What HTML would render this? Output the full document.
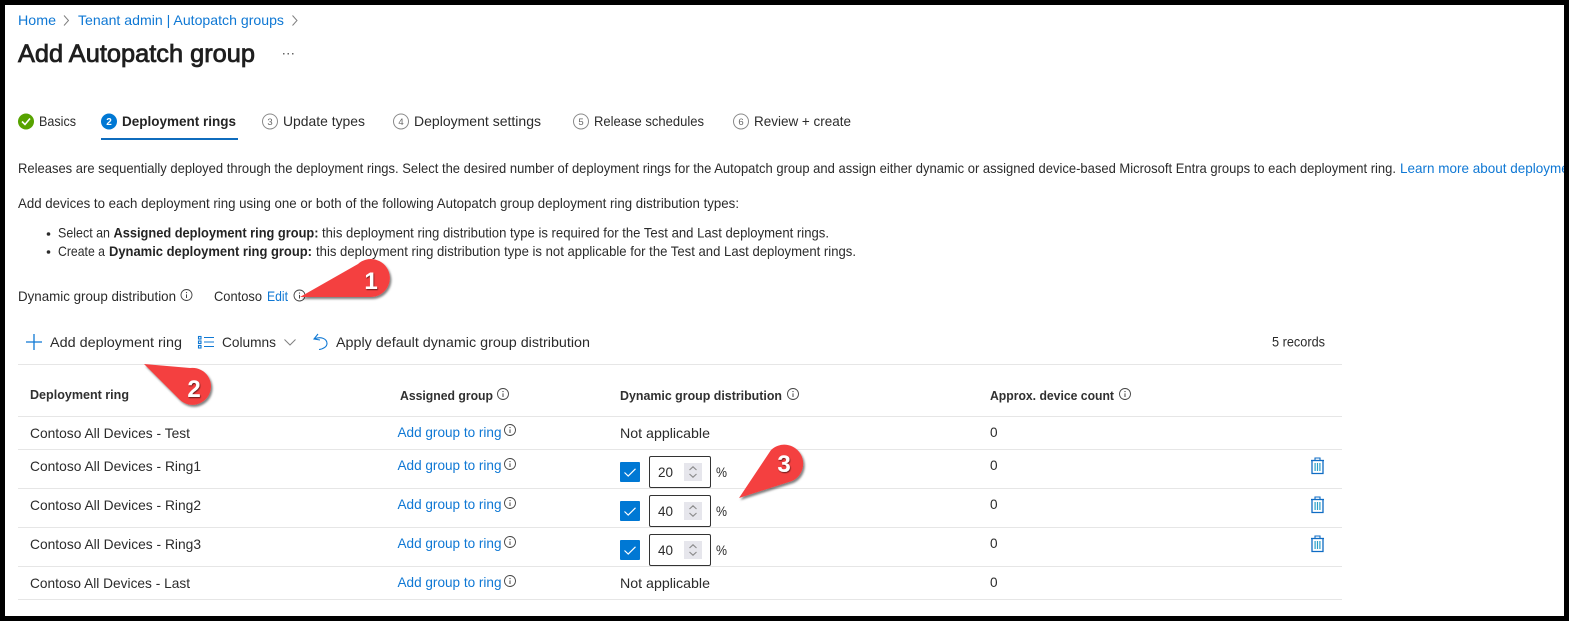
<!DOCTYPE html>
<html lang="en"><head><meta charset="utf-8"><title>Add Autopatch group</title>
<style>
html,body{margin:0;padding:0;background:#fff;width:1569px;height:621px;overflow:hidden}
svg{display:block}
text{font-family:"Liberation Sans",sans-serif;font-size:13.6px;fill:#2b2b2b;white-space:pre}
.l{fill:#0f78d4}
.b{font-weight:700;fill:#242424;font-size:13.4px}
.h{font-weight:700;font-size:12.5px;fill:#303030}
.n{fill:#fff;font-weight:700;font-size:24px;text-anchor:middle}
.m{font-size:14px}
.ic{fill:none;stroke:#808080;stroke-width:1}
</style></head><body>
<svg width="1569" height="621" viewBox="0 0 1569 621" xmlns="http://www.w3.org/2000/svg">
<defs>
<clipPath id="c"><rect x="0" y="0" width="1564" height="616"/></clipPath>
<filter id="s" x="-20%" y="-20%" width="150%" height="150%"><feDropShadow dx="1.5" dy="2" stdDeviation="1" flood-color="#000" flood-opacity=".5"/></filter>
<filter id="t" x="-30%" y="-30%" width="160%" height="160%"><feDropShadow dx="0.7" dy="1" stdDeviation=".6" flood-color="#000" flood-opacity=".6"/></filter>
<g id="i"><circle cx="0" cy="0" r="5.500" fill="none" stroke="#444" stroke-width=".9"/><path d="M0-.6V3" stroke="#444" stroke-width="1"/><rect x="-.55" y="-3" width="1.100" height="1.100" fill="#444"/></g>
<g id="tr"><path d="M-6.500-5.500H6.500" stroke="#0f6cc4" stroke-width="1.300"/><path d="M-2.500-5.500V-8H2.500V-5.500" fill="none" stroke="#0f6cc4" stroke-width="1.100"/><path d="M-5.500-5.500V7.500H5.500V-5.500" fill="none" stroke="#0f6cc4" stroke-width="1.300"/><path d="M-2.400-3V5M0-3V5M2.400-3V5" stroke="#2a9fc8" stroke-width="1.200"/></g>
<g id="sp"><rect x="0" y="0" width="18" height="18" fill="#e6e6ec"/><path d="M5.500 7L9 3.800L12.500 7M5.500 11L9 14.200L12.500 11" fill="none" stroke="#8a8a8a" stroke-width="1.100"/></g>
<g id="ck"><rect x="0" y="0" width="20" height="20" rx="1" fill="#0078d4"/><path d="M4.500 10.500L8.200 14L15.500 6.800" fill="none" stroke="#fff" stroke-width="1.200"/></g>
</defs>
<rect width="1569" height="621" fill="#000"/>
<rect x="5" y="5" width="1559" height="611" fill="#fff"/>
<g clip-path="url(#c)">
<text x="18" y="25" class="l m" textLength="38" lengthAdjust="spacingAndGlyphs">Home</text>
<path d="M64 15.500L68.500 20.500L64 25.500" class="ic"/>
<text x="78" y="25" class="l m" textLength="206" lengthAdjust="spacingAndGlyphs">Tenant admin | Autopatch groups</text>
<path d="M292.500 15.500L297 20.500L292.500 25.500" class="ic"/>
<text x="18" y="62" style="font-size:25px;fill:#1f1f1f;stroke:#1f1f1f;stroke-width:.8px" textLength="237" lengthAdjust="spacingAndGlyphs">Add Autopatch group</text>
<g fill="#666"><rect x="283" y="53" width="1.500" height="1.500"/><rect x="287.500" y="53" width="1.500" height="1.500"/><rect x="292" y="53" width="1.500" height="1.500"/></g>

<circle cx="26" cy="121.500" r="8" fill="#57a300"/><path d="M22 121.500L25 124.500L30 118.500" fill="none" stroke="#fff" stroke-width="1.600"/>
<text x="39" y="126" class="m" textLength="37" lengthAdjust="spacingAndGlyphs">Basics</text>
<circle cx="109" cy="121.500" r="8" fill="#0078d4"/><text x="109" y="125" text-anchor="middle" style="font-size:10px;fill:#fff;font-weight:700">2</text>
<text x="122" y="126" class="b" textLength="114" lengthAdjust="spacingAndGlyphs">Deployment rings</text>
<rect x="101" y="138" width="137" height="2" fill="#0f6cbd"/>
<circle cx="270" cy="121.500" r="7.500" fill="none" stroke="#8a8a8a"/><text x="270" y="125" text-anchor="middle" style="font-size:9.500px;fill:#666">3</text>
<text x="283" y="126" class="m" textLength="82" lengthAdjust="spacingAndGlyphs">Update types</text>
<circle cx="401" cy="121.500" r="7.500" fill="none" stroke="#8a8a8a"/><text x="401" y="125" text-anchor="middle" style="font-size:9.500px;fill:#666">4</text>
<text x="414" y="126" class="m" textLength="127" lengthAdjust="spacingAndGlyphs">Deployment settings</text>
<circle cx="581" cy="121.500" r="7.500" fill="none" stroke="#8a8a8a"/><text x="581" y="125" text-anchor="middle" style="font-size:9.500px;fill:#666">5</text>
<text x="594" y="126" class="m" textLength="110" lengthAdjust="spacingAndGlyphs">Release schedules</text>
<circle cx="741" cy="121.500" r="7.500" fill="none" stroke="#8a8a8a"/><text x="741" y="125" text-anchor="middle" style="font-size:9.500px;fill:#666">6</text>
<text x="754" y="126" class="m" textLength="97" lengthAdjust="spacingAndGlyphs">Review + create</text>

<text x="18" y="173" textLength="1378" lengthAdjust="spacingAndGlyphs">Releases are sequentially deployed through the deployment rings. Select the desired number of deployment rings for the Autopatch group and assign either dynamic or assigned device-based Microsoft Entra groups to each deployment ring.</text>
<text x="1400" y="173" class="l" textLength="180" lengthAdjust="spacingAndGlyphs">Learn more about deployment</text>
<text x="18" y="208" textLength="721" lengthAdjust="spacingAndGlyphs">Add devices to each deployment ring using one or both of the following Autopatch group deployment ring distribution types:</text>
<circle cx="48.500" cy="234" r="1.800" fill="#2b2b2b"/><circle cx="48.500" cy="252" r="1.800" fill="#2b2b2b"/>
<text x="58" y="237.500" textLength="52" lengthAdjust="spacingAndGlyphs">Select an</text>
<text x="113.500" y="237.500" class="b" textLength="205" lengthAdjust="spacingAndGlyphs">Assigned deployment ring group:</text>
<text x="322" y="237.500" textLength="507" lengthAdjust="spacingAndGlyphs">this deployment ring distribution type is required for the Test and Last deployment rings.</text>
<text x="58" y="256" textLength="47" lengthAdjust="spacingAndGlyphs">Create a</text>
<text x="109" y="256" class="b" textLength="203" lengthAdjust="spacingAndGlyphs">Dynamic deployment ring group:</text>
<text x="316" y="256" textLength="540" lengthAdjust="spacingAndGlyphs">this deployment ring distribution type is not applicable for the Test and Last deployment rings.</text>

<text x="18" y="301" textLength="158" lengthAdjust="spacingAndGlyphs">Dynamic group distribution</text>
<use href="#i" x="186.500" y="295"/>
<text x="214" y="301" textLength="48" lengthAdjust="spacingAndGlyphs">Contoso</text>
<text x="267" y="301" class="l" textLength="21" lengthAdjust="spacingAndGlyphs">Edit</text>
<use href="#i" x="299.500" y="295.500"/>

<path d="M34 334V350M26 342H42" stroke="#0f78d4" stroke-width="1.300" fill="none"/>
<text x="50" y="347" class="m" textLength="132" lengthAdjust="spacingAndGlyphs">Add deployment ring</text>
<g fill="none" stroke="#0f78d4" stroke-width="1.100"><rect x="198.500" y="336.500" width="2.500" height="2.500"/><rect x="198.500" y="341" width="2.500" height="2.500"/><rect x="198.500" y="345.500" width="2.500" height="2.500"/><path d="M204 337.500H214M204 342H214M204 346.500H214"/></g>
<text x="222" y="347" class="m" textLength="54" lengthAdjust="spacingAndGlyphs">Columns</text>
<path d="M284.500 339.500L290 345L295.500 339.500" class="ic"/>
<path d="M318 334L314 339L320 340M314.500 339C320 336 327 338.500 327 343.500C327 346.500 323.500 349 319 349.500" fill="none" stroke="#0f78d4" stroke-width="1.100"/>
<text x="336" y="347" class="m" textLength="254" lengthAdjust="spacingAndGlyphs">Apply default dynamic group distribution</text>
<text x="1272" y="346.500" textLength="53" lengthAdjust="spacingAndGlyphs">5 records</text>

<g fill="#e6e6e6"><rect x="18" y="364" width="1324" height="1"/><rect x="18" y="416" width="1324" height="1"/><rect x="18" y="449" width="1324" height="1"/><rect x="18" y="488" width="1324" height="1"/><rect x="18" y="527" width="1324" height="1"/><rect x="18" y="566" width="1324" height="1"/><rect x="18" y="599" width="1324" height="1"/></g>

<text x="30" y="399" class="h" textLength="99" lengthAdjust="spacingAndGlyphs">Deployment ring</text>
<text x="400" y="400" class="h" textLength="93" lengthAdjust="spacingAndGlyphs">Assigned group</text><use href="#i" x="503" y="394"/>
<text x="620" y="400" class="h" textLength="162" lengthAdjust="spacingAndGlyphs">Dynamic group distribution</text><use href="#i" x="793" y="394"/>
<text x="990" y="400" class="h" textLength="124" lengthAdjust="spacingAndGlyphs">Approx. device count</text><use href="#i" x="1125" y="394"/>

<text x="30" y="438" class="m" textLength="160" lengthAdjust="spacingAndGlyphs">Contoso All Devices - Test</text>
<text x="397.500" y="437" class="l m" textLength="104" lengthAdjust="spacingAndGlyphs">Add group to ring</text><use href="#i" x="510" y="430"/>
<text x="620" y="438" class="m" textLength="90" lengthAdjust="spacingAndGlyphs">Not applicable</text>
<text x="990" y="437">0</text>

<text x="30" y="471" class="m" textLength="171" lengthAdjust="spacingAndGlyphs">Contoso All Devices - Ring1</text>
<text x="397.500" y="470" class="l m" textLength="104" lengthAdjust="spacingAndGlyphs">Add group to ring</text><use href="#i" x="510" y="464"/>
<use href="#ck" x="620" y="462"/>
<rect x="649.500" y="456.500" width="61" height="31" rx="1.500" fill="#fff" stroke="#333"/>
<text x="658" y="477" class="m" textLength="15" lengthAdjust="spacingAndGlyphs">20</text><use href="#sp" x="684" y="463"/>
<text x="716" y="477" class="m" textLength="11" lengthAdjust="spacingAndGlyphs">%</text>
<text x="990" y="470">0</text><use href="#tr" x="1317.500" y="466"/>

<text x="30" y="510" class="m" textLength="171" lengthAdjust="spacingAndGlyphs">Contoso All Devices - Ring2</text>
<text x="397.500" y="509" class="l m" textLength="104" lengthAdjust="spacingAndGlyphs">Add group to ring</text><use href="#i" x="510" y="503"/>
<use href="#ck" x="620" y="501"/>
<rect x="649.500" y="495.500" width="61" height="31" rx="1.500" fill="#fff" stroke="#333"/>
<text x="658" y="516" class="m" textLength="15" lengthAdjust="spacingAndGlyphs">40</text><use href="#sp" x="684" y="502"/>
<text x="716" y="516" class="m" textLength="11" lengthAdjust="spacingAndGlyphs">%</text>
<text x="990" y="509">0</text><use href="#tr" x="1317.500" y="505"/>

<text x="30" y="549" class="m" textLength="171" lengthAdjust="spacingAndGlyphs">Contoso All Devices - Ring3</text>
<text x="397.500" y="548" class="l m" textLength="104" lengthAdjust="spacingAndGlyphs">Add group to ring</text><use href="#i" x="510" y="542"/>
<use href="#ck" x="620" y="540"/>
<rect x="649.500" y="534.500" width="61" height="31" rx="1.500" fill="#fff" stroke="#333"/>
<text x="658" y="555" class="m" textLength="15" lengthAdjust="spacingAndGlyphs">40</text><use href="#sp" x="684" y="541"/>
<text x="716" y="555" class="m" textLength="11" lengthAdjust="spacingAndGlyphs">%</text>
<text x="990" y="548">0</text><use href="#tr" x="1317.500" y="544"/>

<text x="30" y="588" class="m" textLength="160" lengthAdjust="spacingAndGlyphs">Contoso All Devices - Last</text>
<text x="397.500" y="587" class="l m" textLength="104" lengthAdjust="spacingAndGlyphs">Add group to ring</text><use href="#i" x="510" y="581"/>
<text x="620" y="588" class="m" textLength="90" lengthAdjust="spacingAndGlyphs">Not applicable</text>
<text x="990" y="587">0</text>

<path d="M300 297L358 264A19 19 0 1 1 370 297Z" fill="#f44040" filter="url(#s)"/>
<text x="371" y="289" class="n" filter="url(#t)">1</text>
<path d="M144 364L190 368A18.500 18.500 0 1 1 180 400Z" fill="#f44040" filter="url(#s)"/>
<text x="194" y="397" class="n" filter="url(#t)">2</text>
<path d="M739 498L771 450A19 19 0 1 1 792 481Z" fill="#f44040" filter="url(#s)"/>
<text x="784" y="472" class="n" filter="url(#t)">3</text>
</g>
</svg>
</body></html>
